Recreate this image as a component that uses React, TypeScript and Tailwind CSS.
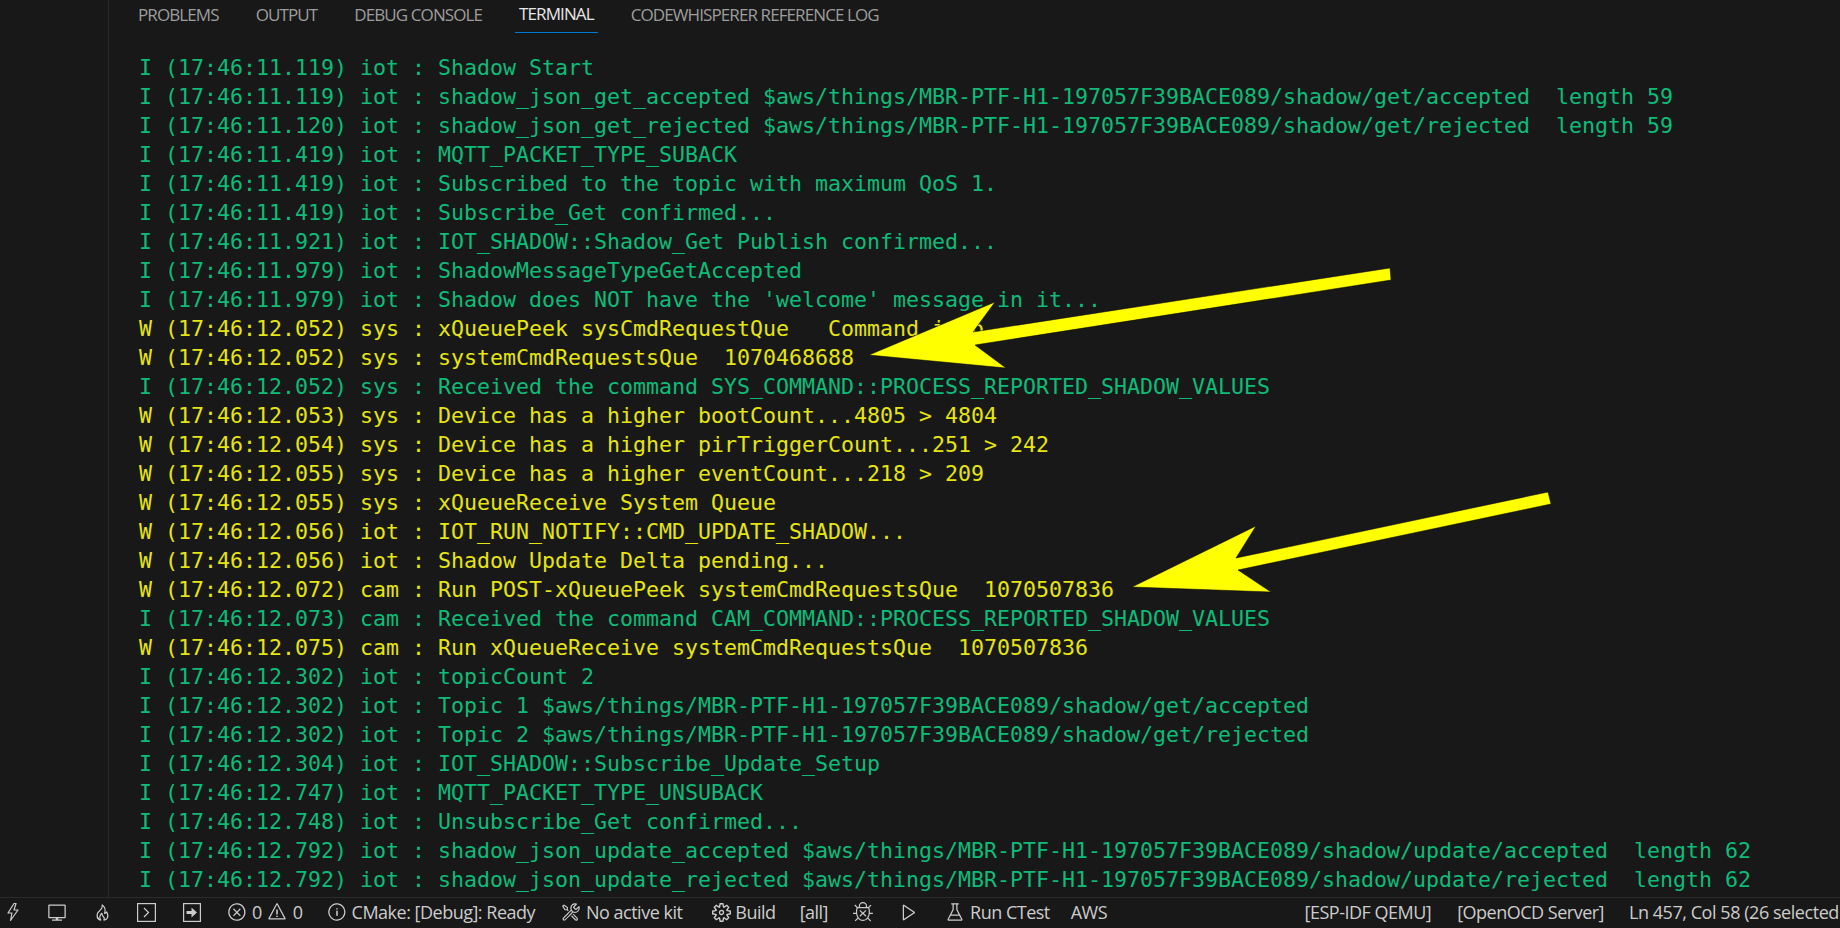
import React from 'react';
import {
  VscBeaker,
  VscDebug,
  VscError,
  VscFlame,
  VscInfo,
  VscPlay,
  VscSettingsGear,
  VscTools,
  VscVm,
  VscWarning,
} from 'react-icons/vsc';

const tabs = ['PROBLEMS', 'OUTPUT', 'DEBUG CONSOLE', 'TERMINAL', 'CODEWHISPERER REFERENCE LOG'];

const lines = [
  'I (17:46:11.119) iot : Shadow Start',
  'I (17:46:11.119) iot : shadow_json_get_accepted $aws/things/MBR-PTF-H1-197057F39BACE089/shadow/get/accepted  length 59',
  'I (17:46:11.120) iot : shadow_json_get_rejected $aws/things/MBR-PTF-H1-197057F39BACE089/shadow/get/rejected  length 59',
  'I (17:46:11.419) iot : MQTT_PACKET_TYPE_SUBACK',
  'I (17:46:11.419) iot : Subscribed to the topic with maximum QoS 1.',
  'I (17:46:11.419) iot : Subscribe_Get confirmed...',
  'I (17:46:11.921) iot : IOT_SHADOW::Shadow_Get Publish confirmed...',
  'I (17:46:11.979) iot : ShadowMessageTypeGetAccepted',
  "I (17:46:11.979) iot : Shadow does NOT have the 'welcome' message in it...",
  'W (17:46:12.052) sys : xQueuePeek sysCmdRequestQue   Command info',
  'W (17:46:12.052) sys : systemCmdRequestsQue  1070468688',
  'I (17:46:12.052) sys : Received the command SYS_COMMAND::PROCESS_REPORTED_SHADOW_VALUES',
  'W (17:46:12.053) sys : Device has a higher bootCount...4805 > 4804',
  'W (17:46:12.054) sys : Device has a higher pirTriggerCount...251 > 242',
  'W (17:46:12.055) sys : Device has a higher eventCount...218 > 209',
  'W (17:46:12.055) sys : xQueueReceive System Queue',
  'W (17:46:12.056) iot : IOT_RUN_NOTIFY::CMD_UPDATE_SHADOW...',
  'W (17:46:12.056) iot : Shadow Update Delta pending...',
  'W (17:46:12.072) cam : Run POST-xQueuePeek systemCmdRequestsQue  1070507836',
  'I (17:46:12.073) cam : Received the command CAM_COMMAND::PROCESS_REPORTED_SHADOW_VALUES',
  'W (17:46:12.075) cam : Run xQueueReceive systemCmdRequestsQue  1070507836',
  'I (17:46:12.302) iot : topicCount 2',
  'I (17:46:12.302) iot : Topic 1 $aws/things/MBR-PTF-H1-197057F39BACE089/shadow/get/accepted',
  'I (17:46:12.302) iot : Topic 2 $aws/things/MBR-PTF-H1-197057F39BACE089/shadow/get/rejected',
  'I (17:46:12.304) iot : IOT_SHADOW::Subscribe_Update_Setup',
  'I (17:46:12.747) iot : MQTT_PACKET_TYPE_UNSUBACK',
  'I (17:46:12.748) iot : Unsubscribe_Get confirmed...',
  'I (17:46:12.792) iot : shadow_json_update_accepted $aws/things/MBR-PTF-H1-197057F39BACE089/shadow/update/accepted  length 62',
  'I (17:46:12.792) iot : shadow_json_update_rejected $aws/things/MBR-PTF-H1-197057F39BACE089/shadow/update/rejected  length 62',
];

const Bolt = () => (
  <svg width="14" height="20" viewBox="0 0 14 20" fill="none" stroke="currentColor" strokeWidth="1.2" strokeLinejoin="round">
    <path d="M8 1.5 2 11h4l-1.5 7.5L12 8H8l2-6.5z" />
  </svg>
);

const TerminalBox = () => (
  <svg width="19" height="19" viewBox="0 0 19 19" fill="none" stroke="currentColor" strokeWidth="1.2">
    <rect x="0.6" y="0.6" width="17.8" height="17.8" />
    <path d="m7 5 4.5 4.5L7 14" />
  </svg>
);

const ArrowBox = () => (
  <svg width="18" height="19" viewBox="0 0 18 19" fill="none">
    <rect x="0.6" y="0.6" width="16.8" height="17.8" stroke="currentColor" strokeWidth="1.2" />
    <path d="M3.5 8h5V4.5l5.5 5-5.5 5V11h-5z" fill="currentColor" />
  </svg>
);

export default function App() {
  return (
    <div className="relative flex h-[928px] w-[1840px] flex-col overflow-hidden bg-[#181818] font-['Open_Sans',sans-serif]">
      <div className="flex min-h-0 flex-1">
        <div className="w-[109px] shrink-0 border-r border-[#2b2b2b]" />

        <div className="min-w-0 flex-1">
          {/* Panel tabs */}
          <div className="flex h-[33px] gap-[29px] pl-[25px] text-[17px] tracking-[-0.9px] text-[#9d9d9d]">
            {tabs.map((tab) => (
              <div
                key={tab}
                className={
                  tab === 'TERMINAL'
                    ? 'flex h-full items-center border-b border-[#0078d4] px-[4px] pb-[4px] text-[#e7e7e7]'
                    : 'flex h-full items-center px-[4px] pb-[4px]'
                }
              >
                {tab}
              </div>
            ))}
          </div>

          {/* Terminal output */}
          <div className="pl-[30px] pt-[20px] font-['DejaVu_Sans_Mono',monospace] text-[21.6px] leading-[29px] whitespace-pre">
            {lines.map((line, i) => (
              <div key={i} className={line.startsWith('W') ? 'text-[#e5e510]' : 'text-[#0dbc79]'}>
                {line}
              </div>
            ))}
          </div>
        </div>
      </div>

      {/* Status bar */}
      <div className="flex h-[31px] shrink-0 items-center whitespace-nowrap border-t border-[#2b2b2b] pb-[2px] text-[18px] tracking-[-0.5px] text-[#cccccc]">
        <div className="ml-[6px]"><Bolt /></div>
        <VscVm className="ml-[27px]" size={20} />
        <VscFlame className="ml-[26px]" size={19} />
        <div className="ml-[25px]"><TerminalBox /></div>
        <div className="ml-[27px]"><ArrowBox /></div>
        <VscError className="ml-[26px]" size={20} />
        <span className="ml-[5px]">0</span>
        <VscWarning className="ml-[5px]" size={20} />
        <span className="ml-[6px]">0</span>
        <VscInfo className="ml-[24px]" size={20} />
        <span className="ml-[5px]">CMake: [Debug]: Ready</span>
        <VscTools className="ml-[26px]" size={20} />
        <span className="ml-[5px]">No active kit</span>
        <VscSettingsGear className="ml-[30px]" size={19} />
        <span className="ml-[4px]">Build</span>
        <span className="ml-[24px]">[all]</span>
        <VscDebug className="ml-[25px]" size={20} />
        <VscPlay className="ml-[26px]" size={20} />
        <VscBeaker className="ml-[26px]" size={20} />
        <span className="ml-[5px]">Run CTest</span>
        <span className="ml-[21px]">AWS</span>
        <div className="ml-auto flex shrink-0">
          <span>[ESP-IDF QEMU]</span>
          <span className="ml-[26px]">[OpenOCD Server]</span>
          <span className="ml-[25px] w-[211px] tracking-[-0.45px]">Ln 457, Col 58 (26 selected</span>
        </div>
      </div>

      {/* Annotation arrows drawn over the terminal */}
      <svg className="absolute left-0 top-0" width="1840" height="928" viewBox="0 0 1840 928" fill="#ffff00">
        <polygon points="1390,268 973,332 995,302 869,355 1006,368 975,345 1391,280" stroke="#000" strokeWidth="0.5" />
        <polygon points="1548,492 1236,558 1256,526 1132,587 1271,592 1238,570 1551,504" stroke="#000" strokeWidth="0.5" />
      </svg>
    </div>
  );
}
